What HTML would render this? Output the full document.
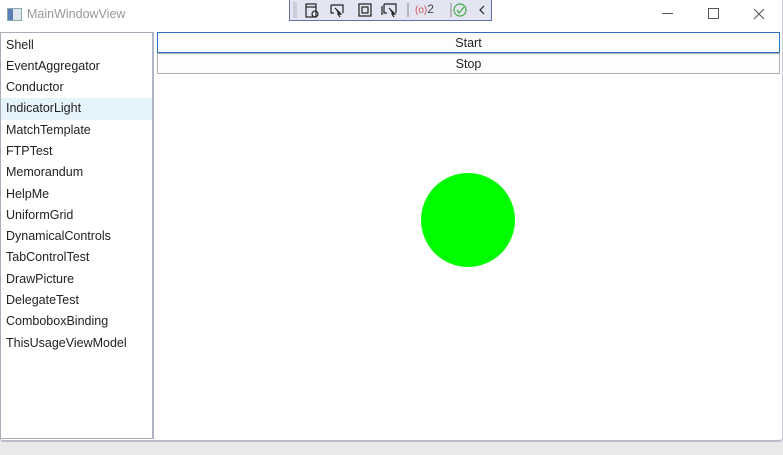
<!DOCTYPE html>
<html><head><style>
body{margin:0;width:783px;height:455px;background:#e9e9e9;font-family:"Liberation Sans","Noto Sans CJK SC",sans-serif;position:relative;overflow:hidden}
.win{position:absolute;left:0;top:0;width:782px;height:440px;background:#fff;border-bottom:2px solid #b8bccb;border-right:1px solid #c8cad4;border-radius:0 0 4px 4px}
.title{position:absolute;left:27px;top:7px;font-size:12.5px;color:#999}
.ico{position:absolute;left:7px;top:8px;width:13px;height:11px;border:1px solid #8aa;background:linear-gradient(90deg,#5b7fb5 5px,#dfe6ee 5px)}
.tb{position:absolute;left:289px;top:0;width:201px;height:20px;background:#e3e6f2;border:1px solid #6670a8;border-top:none;font-size:12px}
.ctl{position:absolute;top:5px;font-size:13px;color:#444}
.list{position:absolute;left:0;top:32px;width:151px;height:405px;border:1px solid #a8acb8;border-right:2px solid #b0b6c8}
.it{height:21.3px;line-height:21.3px;padding-left:5px;font-size:12.5px;color:#222}
.sel{background:#e5f3fb}
.btn{position:absolute;left:157px;width:621px;height:19px;border:1px solid #adadad;background:#fdfdfd;text-align:center;font-size:12.5px;line-height:21px;color:#222}
.circ{position:absolute;left:421px;top:173px;width:94px;height:94px;border-radius:50%;background:#00ff00}
</style></head><body>
<div class="win">
<div class="ico"></div><div class="title">MainWindowView</div>
<div class="tb">
<div style="position:absolute;left:3px;top:2px;width:4px;height:16px;background:radial-gradient(#889 0.6px,transparent 0.8px) 0 0/2px 2px"></div>
<svg width="201" height="20" style="position:absolute;left:0;top:0" fill="none" stroke="#222" stroke-width="1.2">
<rect x="16" y="4" width="10" height="13"/><path d="M16 7h10"/><circle cx="25" cy="14" r="3"/>
<path d="M41 5h12v8M41 5v8h3"/><path d="M45 8l6 6h-3l2 3" fill="#222"/>
<rect x="69" y="4" width="12" height="12"/><rect x="72" y="7" width="6" height="6"/>
<path d="M94 4h12v9M94 4v9h3M92 6v9"/><path d="M99 8l6 6h-3l2 3" fill="#222"/>
<path d="M118 3v14M161 3v14" stroke="#999"/>
<circle cx="170" cy="10" r="6" stroke="#4a4"/><path d="M167 10l2 3 5-6" stroke="#4a4"/>
<path d="M194 6l-4 4 4 4"/>
</svg>
<div class="ctl" style="left:125px;top:2px;font-size:12px"><span style="color:#c55;font-size:10px">(o)</span>2</div>
</div>
<div style="position:absolute;left:662px;top:13px;width:11px;height:1px;background:#555"></div>
<div style="position:absolute;left:708px;top:8px;width:9px;height:9px;border:1px solid #555"></div>
<svg width="12" height="12" style="position:absolute;left:753px;top:8px" stroke="#555" stroke-width="1"><path d="M1 1l10 10M11 1l-10 10"/></svg>
<div class="list">
<div class="it" style="margin-top:1.5px">Shell</div><div class="it">EventAggregator</div><div class="it">Conductor</div>
<div class="it sel">IndicatorLight</div><div class="it">MatchTemplate</div><div class="it">FTPTest</div>
<div class="it">Memorandum</div><div class="it">HelpMe</div><div class="it">UniformGrid</div>
<div class="it">DynamicalControls</div><div class="it">TabControlTest</div><div class="it">DrawPicture</div>
<div class="it">DelegateTest</div><div class="it">ComboboxBinding</div><div class="it">ThisUsageViewModel</div>
</div>
<div class="btn" style="top:32px;border-color:#2a72c0">Start</div>
<div class="btn" style="top:53px">Stop</div>
<div class="circ"></div>
</div>
</body></html>
